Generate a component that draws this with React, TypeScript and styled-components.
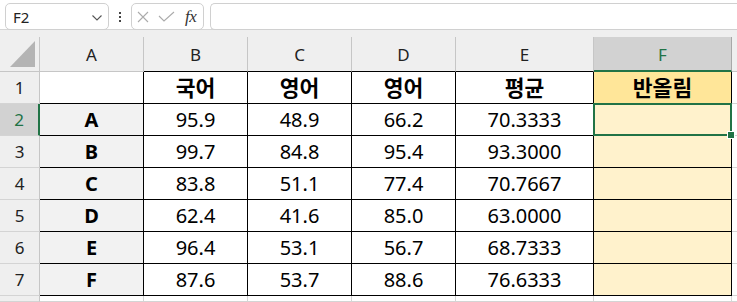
import React from "react";
import styled, { createGlobalStyle } from "styled-components";

const GREEN = "#217346";
const HEADER_BG = "#efefef";
const HEADER_LINE = "#c6c6c6";
const GRID_LINE = "#d4d4d4";

const GlobalStyle = createGlobalStyle`
  html, body {
    margin: 0;
    padding: 0;
    background: #ffffff;
  }
  body {
    font-family: "Noto Sans", "Noto Sans CJK KR", sans-serif;
  }
`;

const Page = styled.div`
  width: 737px;
  height: 302px;
  overflow: hidden;
  background: ${HEADER_BG};
  display: flex;
  flex-direction: column;
`;

/* ---------- formula bar ---------- */

const Toolbar = styled.div`
  height: 30px;
  flex: none;
  box-sizing: border-box;
  display: flex;
  align-items: flex-start;
  padding: 3px 0 0 5px;
  background: #ffffff;
  border-bottom: 1px solid #d6d6d6;
`;

const NameBox = styled.div`
  width: 104px;
  height: 27px;
  box-sizing: border-box;
  border: 1px solid #d0d0d0;
  border-radius: 5px;
  display: flex;
  align-items: center;
  justify-content: space-between;
  padding: 0 6px 0 7px;
  font-size: 15px;
  color: #222;
`;

const Chevron = styled.svg`
  width: 10px;
  height: 6px;
  margin-top: 2px;
`;

const Dots = styled.div`
  width: 22px;
  height: 27px;
  display: flex;
  flex-direction: column;
  align-items: center;
  justify-content: center;
  gap: 2px;

  span {
    width: 2px;
    height: 2px;
    background: #444;
  }
`;

const FxBox = styled.div`
  width: 73px;
  height: 27px;
  box-sizing: border-box;
  border: 1px solid #d0d0d0;
  border-radius: 5px;
  display: flex;
  align-items: center;
  padding-left: 5px;
  gap: 9px;
`;

const Fx = styled.span`
  font-family: "Liberation Serif", "DejaVu Serif", serif;
  font-style: italic;
  font-size: 17px;
  color: #333;
  margin-left: 1px;
  letter-spacing: -0.5px;
`;

const FormulaInput = styled.div`
  flex: 1;
  height: 27px;
  margin-left: 6px;
  box-sizing: border-box;
  border: 1px solid #d0d0d0;
  border-right: none;
  border-radius: 5px 0 0 5px;
`;

/* ---------- sheet ---------- */

const Sheet = styled.div`
  position: relative;
  margin-top: 7px;
  flex: 1;
  display: grid;
  grid-template-columns: 40px 104px 104px 104px 104px 138px 138px 1fr;
  grid-template-rows: 35px repeat(7, 32px) 1fr;
`;

const Corner = styled.div`
  box-sizing: border-box;
  background: ${HEADER_BG};
  border-right: 1px solid ${HEADER_LINE};
  border-bottom: 1px solid ${HEADER_LINE};
  display: flex;
`;

const ColHead = styled.div<{ $selected?: boolean; $bottom?: string; $last?: boolean }>`
  box-sizing: border-box;
  background: ${(p) => (p.$selected ? "#d2d2d2" : HEADER_BG)};
  color: ${(p) => (p.$selected ? GREEN : "#222")};
  border-right: ${(p) => (p.$last ? "none" : `1px solid ${p.$selected ? "#a8a8a8" : HEADER_LINE}`)};
  border-bottom: ${(p) => (p.$selected ? `2px solid ${GREEN}` : `1px solid ${p.$bottom || HEADER_LINE}`)};
  display: flex;
  align-items: center;
  justify-content: center;
  font-size: 17px;
  padding-top: 1px;
`;

const RowHead = styled.div<{ $selected?: boolean }>`
  box-sizing: border-box;
  background: ${(p) => (p.$selected ? "#d2d2d2" : HEADER_BG)};
  color: ${(p) => (p.$selected ? GREEN : "#222")};
  border-right: ${(p) => (p.$selected ? `2px solid ${GREEN}` : `1px solid ${HEADER_LINE}`)};
  border-bottom: 1px solid ${GRID_LINE};
  display: flex;
  align-items: center;
  justify-content: center;
  font-size: 17px;
`;

const Cell = styled.div<{ $bg?: string; $bold?: boolean; $line?: string; $noRight?: boolean }>`
  box-sizing: border-box;
  background: ${(p) => p.$bg || "#ffffff"};
  border-right: ${(p) => (p.$noRight ? "none" : `1px solid ${p.$line || "#000"}`)};
  border-bottom: 1px solid ${(p) => p.$line || "#000"};
  display: flex;
  align-items: center;
  justify-content: center;
  font-size: 20px;
  font-weight: ${(p) => (p.$bold ? 700 : 400)};
  color: #000;
  white-space: nowrap;
  padding-bottom: 1px;
`;

/* Korean headings in row 1 render a little wider than the numbers */
const TitleCell = styled(Cell)`
  font-size: 21.5px;
  font-weight: 700;
  padding-bottom: 2px;
`;

const Selection = styled.div`
  position: absolute;
  left: 593px;
  top: 66px;
  width: 139px;
  height: 33px;
  box-sizing: border-box;
  border: 2px solid ${GREEN};
  pointer-events: none;
`;

const FillHandle = styled.div`
  position: absolute;
  right: -5px;
  bottom: -5px;
  width: 8px;
  height: 8px;
  box-sizing: border-box;
  background: ${GREEN};
  border: 1px solid #ffffff;
`;

const columns = ["A", "B", "C", "D", "E", "F"];

const rows: [string, string, string, string, string][] = [
  ["A", "95.9", "48.9", "66.2", "70.3333"],
  ["B", "99.7", "84.8", "95.4", "93.3000"],
  ["C", "83.8", "51.1", "77.4", "70.7667"],
  ["D", "62.4", "41.6", "85.0", "63.0000"],
  ["E", "96.4", "53.1", "56.7", "68.7333"],
  ["F", "87.6", "53.7", "88.6", "76.6333"],
];

export default function App() {
  return (
    <Page>
      <GlobalStyle />
      <Toolbar>
        <NameBox>
          <span>F2</span>
          <Chevron viewBox="0 0 10 6">
            <polyline points="0.5,0.5 5,5 9.5,0.5" fill="none" stroke="#555" strokeWidth="1.1" />
          </Chevron>
        </NameBox>
        <Dots>
          <span />
          <span />
          <span />
        </Dots>
        <FxBox>
          <svg width="12" height="12" viewBox="0 0 12 12">
            <path d="M1 1 L11 11 M11 1 L1 11" stroke="#ababab" strokeWidth="1.1" fill="none" />
          </svg>
          <svg width="17" height="11" viewBox="0 0 17 11">
            <path d="M1 5 L6 10 L16 1" stroke="#ababab" strokeWidth="1.1" fill="none" />
          </svg>
          <Fx>fx</Fx>
        </FxBox>
        <FormulaInput />
      </Toolbar>

      <Sheet>
        <Corner>
          <svg width="39" height="34" viewBox="0 0 39 34">
            <polygon points="10,30 35,30 35,4" fill="#b4b4b4" />
          </svg>
        </Corner>
        {columns.map((c, i) => (
          <ColHead key={c} $selected={c === "F"} $bottom={i === 0 ? HEADER_LINE : "#000"}>
            {c}
          </ColHead>
        ))}
        <ColHead $last $bottom={HEADER_LINE} />

        {/* row 1: headings */}
        <RowHead>1</RowHead>
        <Cell />
        <TitleCell>국어</TitleCell>
        <TitleCell>영어</TitleCell>
        <TitleCell>영어</TitleCell>
        <TitleCell>평균</TitleCell>
        <TitleCell $bg="#ffe699">반올림</TitleCell>
        <Cell $line={GRID_LINE} $noRight />

        {rows.map((r, i) => (
          <React.Fragment key={r[0]}>
            <RowHead $selected={i === 0}>{i + 2}</RowHead>
            <Cell $bold $bg="#f2f2f2">
              {r[0]}
            </Cell>
            <Cell>{r[1]}</Cell>
            <Cell>{r[2]}</Cell>
            <Cell>{r[3]}</Cell>
            <Cell>{r[4]}</Cell>
            <Cell $bg="#fff2cc" />
            <Cell $line={GRID_LINE} $noRight />
          </React.Fragment>
        ))}

        {/* row 8, only its top shows */}
        <RowHead />
        {columns.map((c) => (
          <Cell key={c} $line={GRID_LINE} />
        ))}
        <Cell $line={GRID_LINE} $noRight />

        <Selection>
          <FillHandle />
        </Selection>
      </Sheet>
    </Page>
  );
}
